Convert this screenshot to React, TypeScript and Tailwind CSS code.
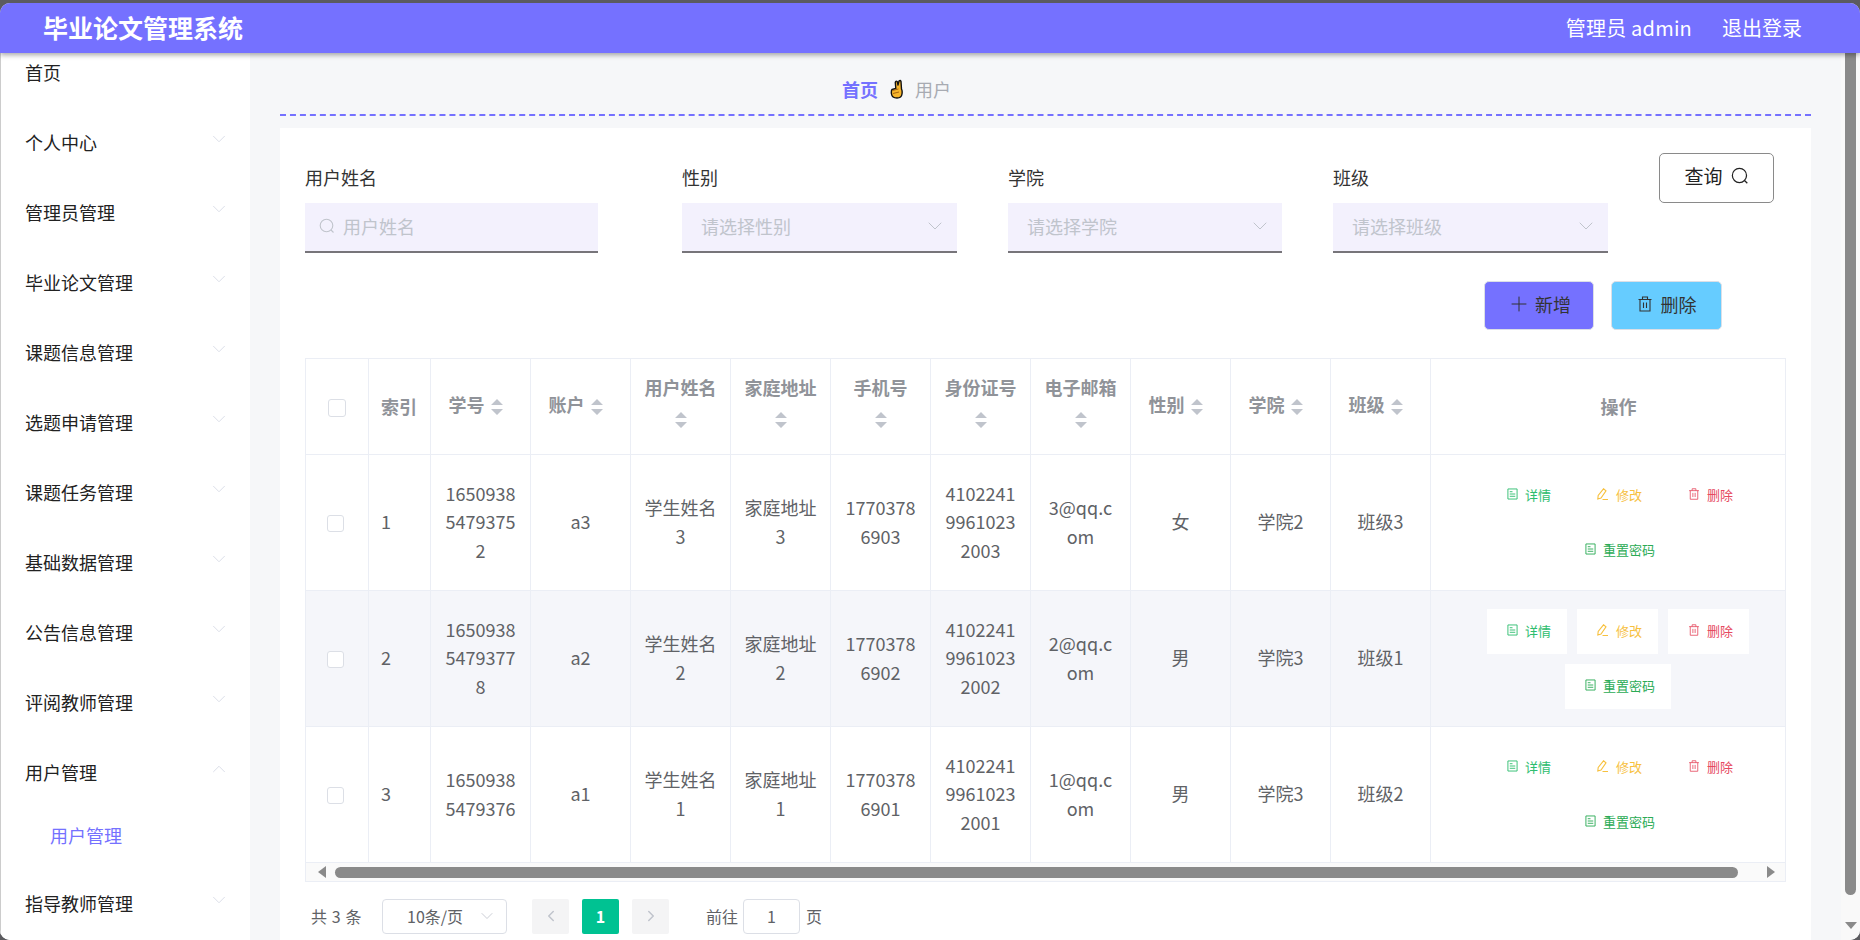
import { ChevronDown, ChevronLeft, ChevronRight, ChevronUp, Plus } from 'lucide-react'

const menus = ['首页', '个人中心', '管理员管理', '毕业论文管理', '课题信息管理', '选题申请管理', '课题任务管理', '基础数据管理', '公告信息管理', '评阅教师管理']

const columns = ['学号', '账户', '用户姓名', '家庭地址', '手机号', '身份证号', '电子邮箱', '性别', '学院', '班级']

const rows = [
  { id: 1, no: '165093854793752', account: 'a3', name: '学生姓名3', addr: '家庭地址3', phone: '17703786903', card: '410224199610232003', mail: '3@qq.com', sex: '女', college: '学院2', cls: '班级3' },
  { id: 2, no: '165093854793778', account: 'a2', name: '学生姓名2', addr: '家庭地址2', phone: '17703786902', card: '410224199610232002', mail: '2@qq.com', sex: '男', college: '学院3', cls: '班级1' },
  { id: 3, no: '16509385479376', account: 'a1', name: '学生姓名1', addr: '家庭地址1', phone: '17703786901', card: '410224199610232001', mail: '1@qq.com', sex: '男', college: '学院3', cls: '班级2' },
]

const SearchIcon = ({ className }: { className: string }) => (
  <svg viewBox="0 0 16 16" fill="none" stroke="currentColor" strokeWidth="1.1" className={className}>
    <circle cx="7.5" cy="7.5" r="6.3" />
    <path d="M12 12l2.500 2.500" />
  </svg>
)

const TrashIcon = ({ className }: { className: string }) => (
  <svg viewBox="0 0 16 16" fill="none" stroke="currentColor" strokeWidth="1.1" className={className}>
    <path d="M1.500 3.500h13M3 3.500v11.500h10V3.500M5.500 3.500V1h5v2.500M6.500 6.500v5.500M9.500 6.500v5.500" />
  </svg>
)

const DocIcon = ({ className }: { className: string }) => (
  <svg viewBox="0 0 12 12" fill="none" stroke="currentColor" strokeWidth="1" className={className}>
    <path d="M1 .5h10v11H1zM3 3.500h3M3 6h6M3 8.500h6" />
  </svg>
)

const EditIcon = ({ className }: { className: string }) => (
  <svg viewBox="0 0 12 12" fill="none" stroke="currentColor" strokeWidth="1.1" className={className}>
    <path d="M6.500 .8L9 2.800 4 10 .8 11 1.200 7.500zM5.500 11.500H11" />
  </svg>
)

const Fingers = () => (
  <svg viewBox="0 0 14 20" className="w-[14px] h-[20px]">
    <path
      d="M3 10.500L6.800 9.500 6.300 3.500Q6.800 1.500 8.200 2.500L9 6 10 2Q11.500.8 12 2.500L12.500 10Q13.500 12 13 15 12.500 19 8 19 3 19 2.500 15 2 12 3 10.500Z"
      fill="#f7b52b"
      stroke="#111"
      strokeWidth="1.4"
      strokeLinejoin="round"
    />
    <path d="M3.500 11.500L9.500 10M4 14.500L10 13" fill="none" stroke="#a8660f" strokeWidth="1" />
  </svg>
)

const SortCaret = () => (
  <span className="inline-flex items-center justify-center w-6 h-[34px] align-middle">
    <svg viewBox="0 0 12 16" className="w-3 h-4 text-[#c0c4cc]" fill="currentColor">
      <path d="M6 0l6 6H0zM0 10h12l-6 6z" />
    </svg>
  </span>
)

const Checkbox = ({ className }: { className: string }) => (
  <span className={`inline-block align-middle bg-white border border-[#dcdfe6] rounded-[3px] ${className}`}></span>
)

const ActionButton = ({ color, icon, label }: { color: string; icon: any; label: string }) => (
  <button className={`flex items-center justify-center h-[45px] pl-5 pr-4 pb-[2px] gap-[7px] bg-white text-[13px] leading-none ${color}`}>
    {icon}
    {label}
  </button>
)

const FormSelect = ({ label, placeholder, className }: { label: string; placeholder: string; className: string }) => (
  <div className={className}>
    <div className="h-[50px] pb-[2px] flex items-center text-[18px] text-[#333]">{label}</div>
    <div className="h-[50px] pb-[2px] flex items-center justify-between pl-[19px] pr-[10px] bg-[#f3f1fd] border-b-2 border-[#77757a] text-[18px] text-[#c0c4cc]">
      {placeholder}
      <ChevronDown className="w-6 h-6" strokeWidth={1} />
    </div>
  </div>
)

const App = () => {
  return (
    <div className="h-[940px] pt-[3px] bg-[#5b5b5f] overflow-hidden font-['Noto_Sans_CJK_SC',sans-serif]">
      <div className="flex flex-col h-[937px] rounded-[10px] overflow-hidden bg-white">
        <div className="relative z-10 flex items-center justify-between h-[50px] shrink-0 pl-[43px] pr-[58px] bg-[#7571ff] text-white shadow-[0_2px_5px_rgba(0,0,0,0.35)]">
          <div className="pb-[2px] text-[25px] font-bold leading-none">毕业论文管理系统</div>
          <div className="flex gap-[30px] text-[20px] leading-none">
            <span className="tracking-[0.2px]">管理员 admin</span>
            <span>退出登录</span>
          </div>
        </div>

        <div className="flex flex-1 min-h-0">
          <div className="w-[250px] shrink-0 overflow-hidden bg-white border-l border-[#ccc] text-[18px] text-[#222]">
            <div className="-mt-[16px]">
              {menus.map((m, i) => (
                <div key={m} className="flex items-center justify-between h-[70px] pl-6 pr-5">
                  {m}
                  {i > 0 && <ChevronDown className="w-[22px] h-[22px] -mt-[6px] text-[#d8dbe6]" strokeWidth={1} />}
                </div>
              ))}
              <div className="flex items-center justify-between h-[70px] pl-6 pr-5">
                用户管理
                <ChevronUp className="w-[22px] h-[22px] -mt-[6px] text-[#d8dbe6]" strokeWidth={1} />
              </div>
              <div className="flex items-center h-[61px] pl-[49px] pb-1 text-[#7571ff]">用户管理</div>
              <div className="flex items-center justify-between h-[70px] pl-6 pr-5">
                指导教师管理
                <ChevronDown className="w-[22px] h-[22px] -mt-[6px] text-[#d8dbe6]" strokeWidth={1} />
              </div>
            </div>
          </div>

          <div className="flex-1 min-w-0 flex flex-col px-[30px] bg-[#f6f7f9]">
            <div className="flex items-center h-[63px] shrink-0 pl-[562px] pt-[11px] border-b-2 border-dashed border-[#7571ff] text-[18px] leading-none">
              <span className="font-bold text-[#7571ff]">首页</span>
              <span className="ml-[11px] mr-[12px]">
                <Fingers />
              </span>
              <span className="text-[#a8abb2]">用户</span>
            </div>

            <div className="flex-1 mt-3 pt-[25px] pl-[25px] bg-white">
              <div className="flex h-[100px]">
                <div className="w-[293px] mr-[84px]">
                  <div className="h-[50px] pb-[2px] flex items-center text-[18px] text-[#333]">用户姓名</div>
                  <div className="h-[50px] pb-[2px] flex items-center pl-[14px] gap-2 bg-[#f3f1fd] border-b-2 border-[#77757a] text-[18px] text-[#c0c4cc]">
                    <SearchIcon className="w-4 h-4" />
                    用户姓名
                  </div>
                </div>
                <FormSelect label="性别" placeholder="请选择性别" className="w-[275px] mr-[51px]" />
                <FormSelect label="学院" placeholder="请选择学院" className="w-[274px] mr-[51px]" />
                <FormSelect label="班级" placeholder="请选择班级" className="w-[275px] mr-[51px]" />
                <button className="flex items-center justify-center gap-2 w-[115px] h-[50px] pb-1 bg-white border border-[#8a8a8a] rounded-[5px] text-[19px] text-[#222]">
                  查询
                  <SearchIcon className="w-[18px] h-[18px]" />
                </button>
              </div>

              <div className="flex justify-end gap-[17px] mt-[28px] pr-[89px]">
                <button className="flex items-center justify-center gap-1 w-[110px] h-[49px] pb-[3px] bg-[#7571ff] border border-[#dcdfe6] rounded-[5px] text-[18px] text-[#333]">
                  <Plus className="w-6 h-6" strokeWidth={1} />
                  新增
                </button>
                <button className="flex items-center justify-center gap-2 w-[111px] h-[49px] pb-[3px] bg-[#66ccff] border border-[#dcdfe6] rounded-[5px] text-[18px] text-[#333]">
                  <TrashIcon className="w-4 h-[18px]" />
                  删除
                </button>
              </div>

              <div className="w-[1481px] mt-7">
                <table className="table-fixed w-[1481px] border-collapse text-[18px] leading-[28.5px] text-[#606266]">
                  <colgroup>
                    <col className="w-[63px]" />
                    <col className="w-[62px]" />
                    {columns.map((c) => (
                      <col key={c} className="w-[100px]" />
                    ))}
                    <col />
                  </colgroup>
                  <thead>
                    <tr className="h-[96px] text-[#909399]">
                      <th className="border border-[#ebeef5] text-center">
                        <Checkbox className="w-[18px] h-[18px] mb-[2px]" />
                      </th>
                      <th className="border border-[#ebeef5] px-3 text-left font-bold whitespace-nowrap">索引</th>
                      {columns.map((c) => (
                        <th key={c} className={`border border-[#ebeef5] text-center font-bold break-all leading-[30px] ${c.length > 2 ? 'px-[13px] pb-1' : 'pl-[13px] pr-[17px]'}`}>
                          {c}
                          <SortCaret />
                        </th>
                      ))}
                      <th className="border border-[#ebeef5] pl-[21px] font-bold">操作</th>
                    </tr>
                  </thead>
                  <tbody>
                    {rows.map((r, i) => (
                      <tr key={r.id} className={`h-[136px] ${i === 1 ? 'bg-[#f5f6fa]' : ''}`}>
                        <td className="border border-[#ebeef5] text-center">
                          <Checkbox className="w-[17px] h-[17px] mr-1 mb-1" />
                        </td>
                        <td className="border border-[#ebeef5] px-3 pb-[2px]">{r.id}</td>
                        {[r.no, r.account, r.name, r.addr, r.phone, r.card, r.mail, r.sex, r.college, r.cls].map((v, j) => (
                          <td key={j} className="border border-[#ebeef5] px-[13px] pb-[2px] text-center break-all">
                            {v}
                          </td>
                        ))}
                        <td className="border border-[#ebeef5] px-[14px]">
                          <div className="flex flex-wrap justify-center gap-[10px] pl-5">
                            <ActionButton color="text-[#2ebd6e]" icon={<DocIcon className="w-[11px] h-3" />} label="详情" />
                            <ActionButton color="text-[#f7c13f]" icon={<EditIcon className="w-3 h-3" />} label="修改" />
                            <ActionButton color="text-[#e64a5f]" icon={<TrashIcon className="w-3 h-3" />} label="删除" />
                            <ActionButton color="text-[#2bab55]" icon={<DocIcon className="w-[11px] h-3" />} label="重置密码" />
                          </div>
                        </td>
                      </tr>
                    ))}
                  </tbody>
                </table>

                <div className="flex items-center h-[19px] pl-3 pr-[10px] gap-[9px] bg-[#fafafa] border border-t-0 border-[#ebeef5]">
                  <svg viewBox="0 0 8 12" className="w-2 h-3 text-[#8a8a8a]" fill="currentColor">
                    <path d="M8 0v12L0 6z" />
                  </svg>
                  <div className="w-[1403px] h-[11px] rounded-full bg-[#8a8a8a]"></div>
                  <svg viewBox="0 0 8 12" className="w-2 h-3 ml-auto text-[#8a8a8a]" fill="currentColor">
                    <path d="M0 0v12l8-6z" />
                  </svg>
                </div>
              </div>

              <div className="flex items-center h-[36px] mt-[16px] pl-[6px] text-[16px] text-[#606266]">
                <span className="w-[71px] tracking-[0.6px]">共 3 条</span>
                <div className="flex items-center justify-between w-[125px] h-[35px] pl-6 pr-[9px] border border-[#dcdfe6] rounded-[4px]">
                  10条/页
                  <ChevronDown className="w-5 h-5 text-[#c0c4cc]" strokeWidth={1} />
                </div>
                <div className="flex items-center justify-center w-[37px] h-[35px] ml-[25px] rounded-[2px] bg-[#f4f4f5] text-[#c0c4cc]">
                  <ChevronLeft className="w-[18px] h-[18px]" strokeWidth={2} />
                </div>
                <div className="flex items-center justify-center w-[37px] h-[35px] ml-[13px] rounded-[2px] bg-[#00c292] font-bold text-white">1</div>
                <div className="flex items-center justify-center w-[37px] h-[35px] ml-[13px] rounded-[2px] bg-[#f4f4f5] text-[#c0c4cc]">
                  <ChevronRight className="w-[18px] h-[18px]" strokeWidth={2} />
                </div>
                <span className="ml-[37px]">前往</span>
                <div className="flex items-center justify-center w-[57px] h-[35px] ml-[5px] mr-[6px] border border-[#dcdfe6] rounded-[4px]">1</div>
                <span>页</span>
              </div>
            </div>
          </div>

          <div className="flex flex-col items-center w-[19px] shrink-0 bg-[#f9f9f9]">
            <div className="w-[11px] h-[842px] rounded-b-full bg-[#8a8a8a]"></div>
            <svg viewBox="0 0 12 7" className="w-3 h-[7px] mt-[27px] text-[#8a8a8a]" fill="currentColor">
              <path d="M0 0h12L6 7z" />
            </svg>
          </div>
        </div>
      </div>
    </div>
  )
}

export default App
